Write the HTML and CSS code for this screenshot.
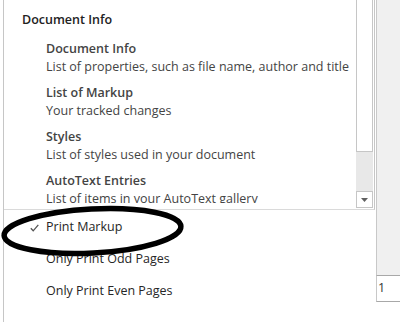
FILE: index.html
```html
<!DOCTYPE html>
<html>
<head>
<meta charset="utf-8">
<link rel="stylesheet" href="styles.css">
</head>
<body>
<div class="page">
  <div class="main">
    <div class="listbox">
      <div class="viewport">
        <div class="group-head">Document Info</div>
        <div class="item"><div class="t">Document Info</div><div class="d">List of properties, such as file name, author and title</div></div>
        <div class="item"><div class="t">List of Markup</div><div class="d">Your tracked changes</div></div>
        <div class="item"><div class="t">Styles</div><div class="d">List of styles used in your document</div></div>
        <div class="item"><div class="t">AutoText Entries</div><div class="d">List of items in your AutoText gallery</div></div>
      </div>
      <div class="scrollbar">
        <div class="thumb"></div>
        <div class="track"></div>
        <div class="arrow"><svg width="7" height="4" viewBox="0 0 7 4"><path d="M0 0H7L3.5 4Z" fill="#606060"/></svg></div>
      </div>
    </div>
    <ul class="menu">
      <li class="checked"><svg class="check" width="9" height="8" viewBox="0 0 9 8"><path d="M0.8 4.2L3.2 6.8L8.3 0.8" fill="none" stroke="#555" stroke-width="1.3"/></svg>Print Markup</li>
      <li>Only Print Odd Pages</li>
      <li>Only Print Even Pages</li>
    </ul>
  </div>
  <div class="side">
    <div class="side-fill"></div>
    <div class="side-input">1</div>
  </div>
  <svg class="annot" width="200" height="70" viewBox="0 195 200 70"><ellipse cx="92.5" cy="231" rx="88.5" ry="22" transform="rotate(-3 92.5 231)" fill="none" stroke="#000" stroke-width="5.5"/></svg>
</div>
</body>
</html>
```
FILE: styles.css
```css
* { box-sizing: border-box; }
html, body { margin: 0; padding: 0; background: #fff; }
body { font-family: "Open Sans", "Noto Sans", sans-serif; font-size: 12.5px; color: #444; }
.page { position: relative; display: flex; width: 400px; height: 322px; overflow: hidden; }
.main { margin-left: 3px; width: 373px; border-left: 1px solid #c6c6c6; display: flex; flex-direction: column; }
.listbox { display: flex; width: 371px; height: 210px; border-right: 1px solid #c6c6c6; border-bottom: 1px solid #dadada; }
.viewport { flex: 1; height: 203px; overflow: hidden; padding-top: 12px; }
.group-head { padding-left: 18px; line-height: 16px; font-weight: 600; color: #222; margin-bottom: 13px; }
.item { padding-left: 42px; margin-bottom: 10px; }
.item .t { line-height: 16px; font-weight: 600; color: #444; margin-bottom: 2px; }
.item .d { line-height: 16px; color: #444; white-space: nowrap; }
.scrollbar { width: 18px; display: flex; flex-direction: column; padding-right: 1px; padding-bottom: 1px; }
.thumb { height: 152px; border: 1px solid #c6c6c6; border-top: none; background: #fff; }
.track { flex: 1; background: #e8e8e8; }
.arrow { height: 17px; border: 1px solid #c6c6c6; background: #fff; display: flex; align-items: center; justify-content: center; }
.menu { list-style: none; margin: 0; padding: 0; }
.menu li { position: relative; height: 32px; padding-top: 9px; padding-left: 42px; line-height: 16px; color: #262626; }
.menu .check { position: absolute; left: 26px; top: 14px; }
.side { width: 24px; display: flex; flex-direction: column; }
.side-fill { height: 275px; background: #f0f0f0; border-left: 1px solid #c8c8c8; }
.side-input { height: 27px; border-left: 1px solid #c8c8c8; border-top: 1px solid #a8a8a8; border-bottom: 1px solid #a8a8a8; padding-left: 1px; line-height: 24px; color: #333; background: #fff; }
.annot { position: absolute; left: 0; top: 195px; }
```
